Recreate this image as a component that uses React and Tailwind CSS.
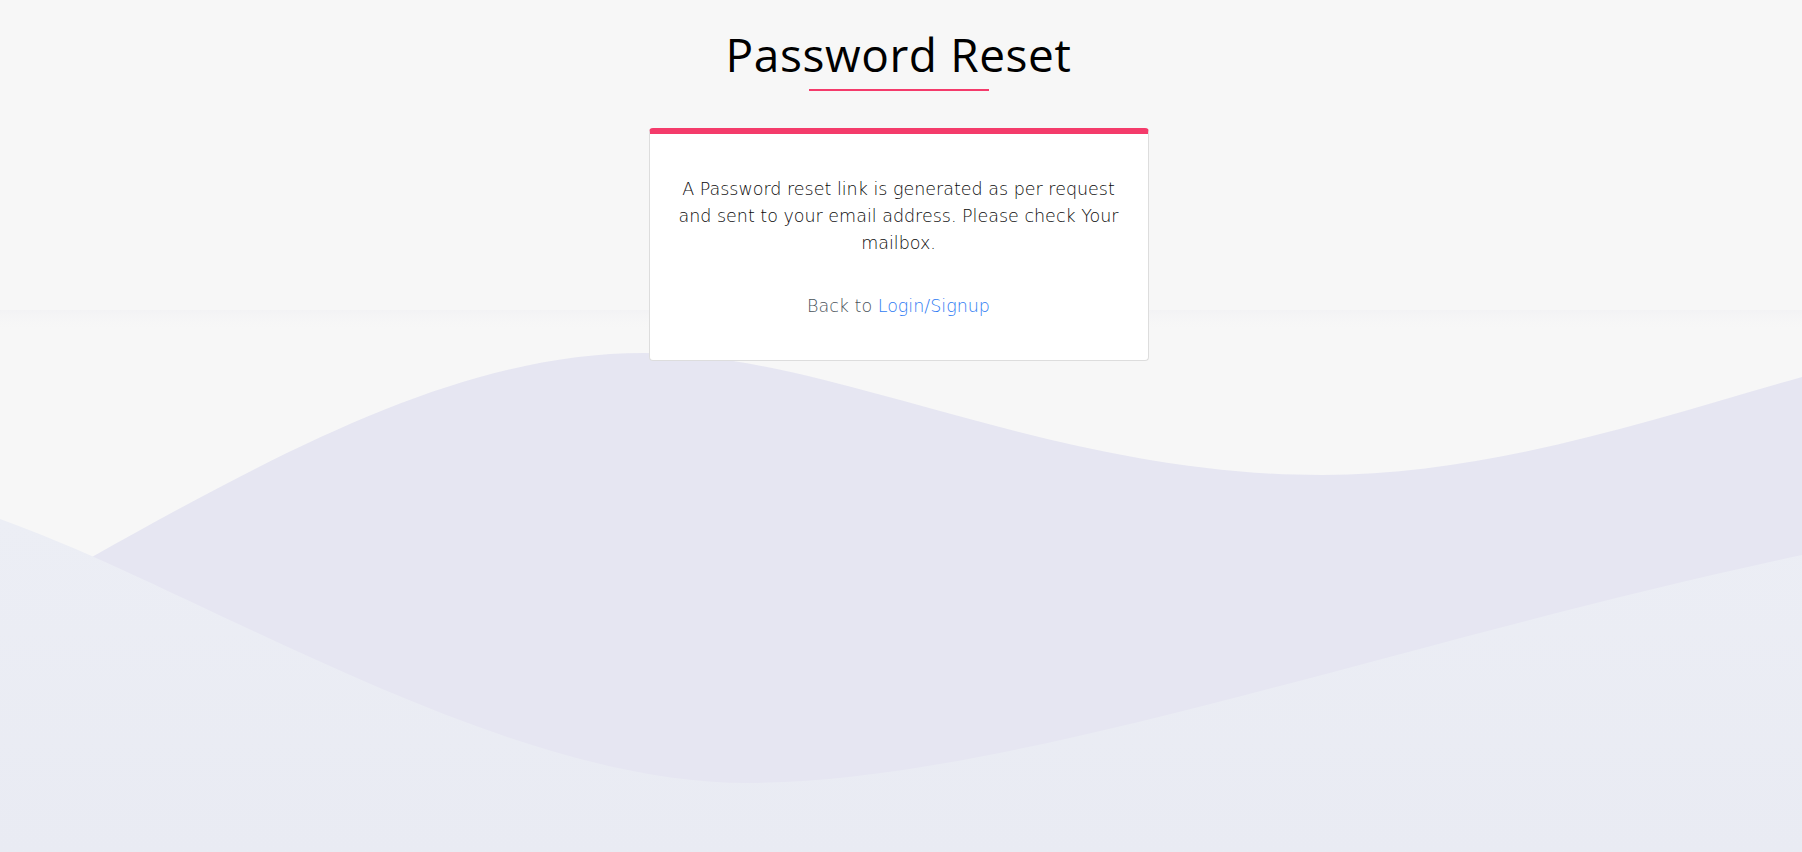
import React from "react";

function Waves() {
  return (
    <svg
      className="absolute inset-0 h-full w-full"
      viewBox="0 0 1802 852"
      preserveAspectRatio="none"
      aria-hidden="true"
    >
      <defs>
        <linearGradient id="topband" x1="0" y1="0" x2="0" y2="1">
          <stop offset="0" stopColor="#f0f0f3" stopOpacity="0.6" />
          <stop offset="1" stopColor="#f7f7f7" stopOpacity="0" />
        </linearGradient>
        <linearGradient id="front" x1="0" y1="0" x2="0" y2="1">
          <stop offset="0" stopColor="#eceef5" />
          <stop offset="1" stopColor="#e9ebf3" />
        </linearGradient>
      </defs>
      <rect x="0" y="0" width="1802" height="852" fill="#f7f7f7" />
      <rect x="0" y="310" width="1802" height="22" fill="url(#topband)" />
      <path
        d="M0,610 L92,557 C300,440 470,353 644,353 C830,353 1050,475 1322,475 C1490,475 1650,420 1802,377 L1802,852 L0,852 Z"
        fill="#e6e6f2"
      />
      <path
        d="M0,519 C200,590 500,783 747,783 C1010,783 1400,640 1802,555 L1802,852 L0,852 Z"
        fill="url(#front)"
      />
    </svg>
  );
}

export default function App() {
  return (
    <div className="relative h-[852px] w-full overflow-hidden bg-[#f7f7f7]">
      <Waves />
      <div className="relative flex flex-col items-center pt-[22px] pr-[5px]">
        <h1
          className="text-[46px] leading-[64px] font-normal text-black tracking-[0.6px]"
          style={{ fontFamily: '"Open Sans", "Liberation Sans", sans-serif' }}
        >
          Password Reset
        </h1>
        <div className="mt-[3px] h-[2px] w-[180px] bg-[#f43b6b]" />
        <div
          className="mt-[37px] w-[500px] rounded-[4px] border border-[#dddddd] border-t-[6px] border-t-[#f43b6b] bg-white px-[18px] pt-[42px] pb-[40px] text-center"
          style={{ fontFamily: '"DejaVu Sans", "Open Sans", sans-serif' }}
        >
          <p className="text-[17.5px] leading-[27px] font-light text-[#0a0a0a]">
            A Password reset link is generated as per request and sent to your
            email address. Please check Your mailbox.
          </p>
          <p className="mt-[36px] text-[17.5px] leading-[27px] font-light text-[#4a525a]">
            Back to{" "}
            <a href="#" className="text-[#2f7bf3]">
              Login/Signup
            </a>
          </p>
        </div>
      </div>
    </div>
  );
}
